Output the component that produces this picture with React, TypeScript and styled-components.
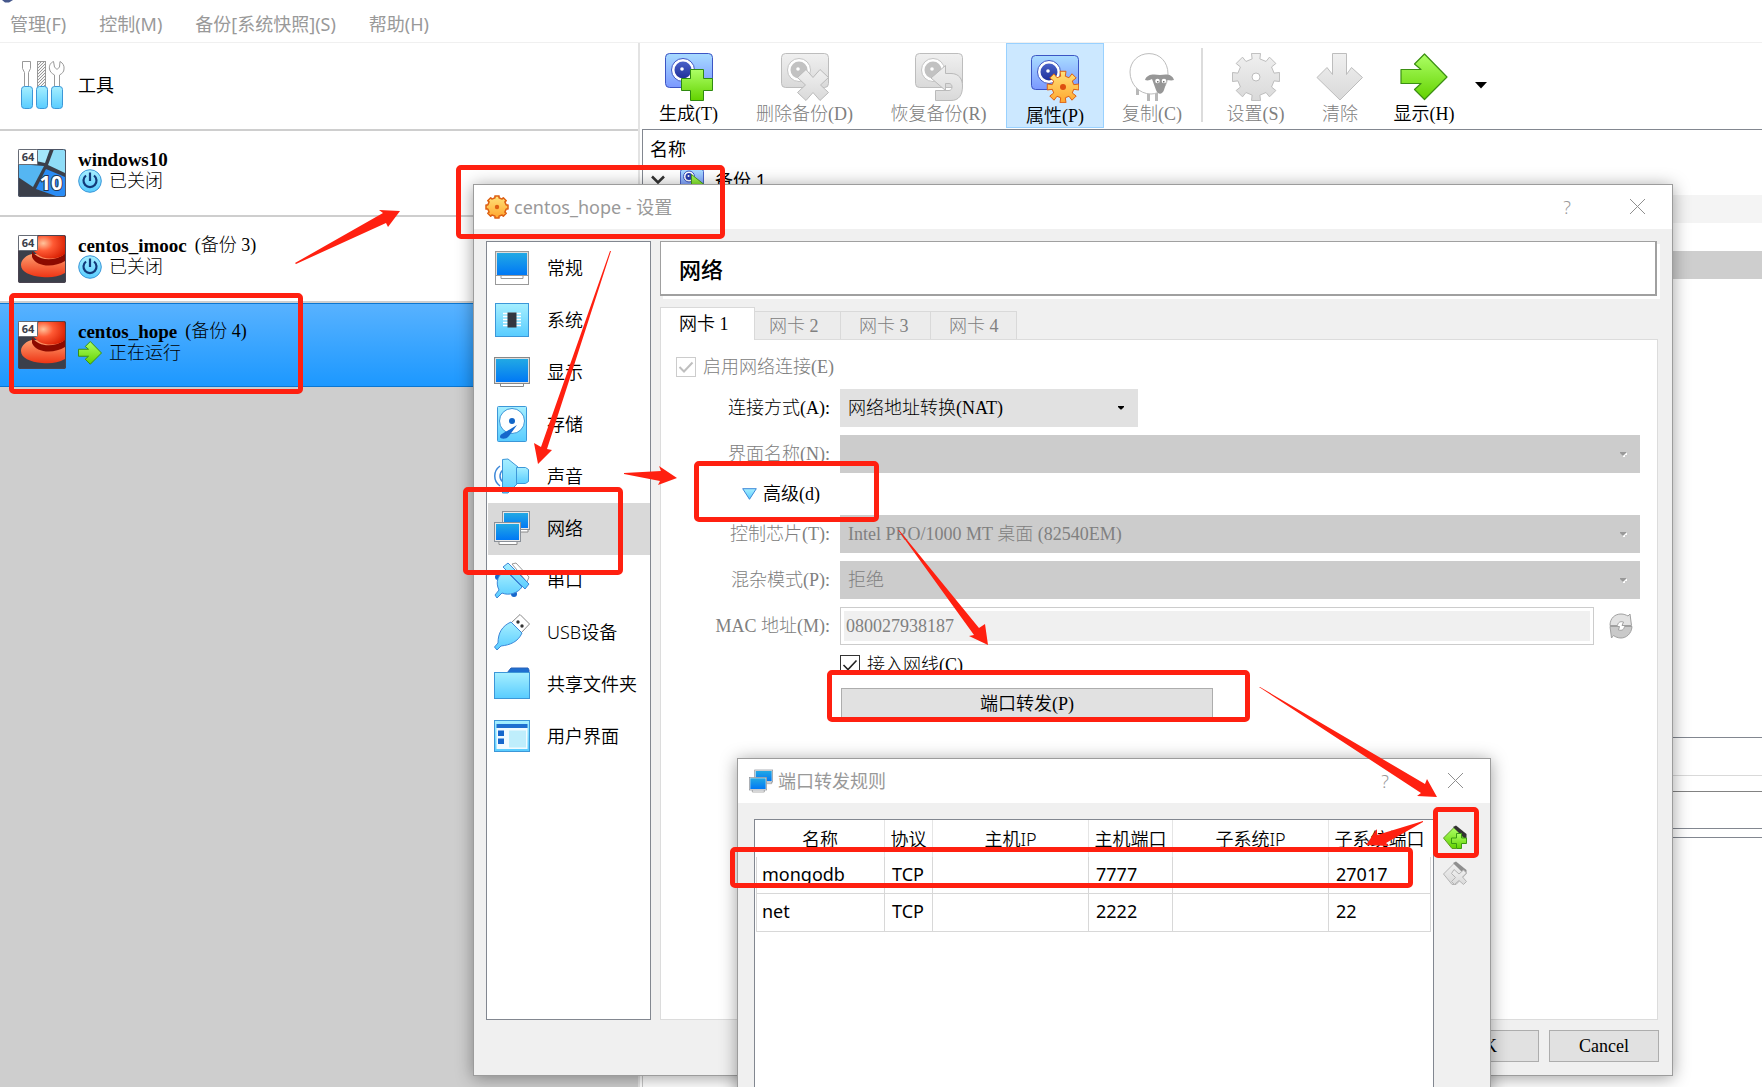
import React from "react";
import styled, { createGlobalStyle, css } from "styled-components";

const ui = `"Noto Sans", "Noto Sans CJK SC", sans-serif`;
const song = `"Liberation Serif", "Noto Sans CJK SC", serif`;
const annotationRed = "#ff2010";

const GlobalStyle = createGlobalStyle`
  *, *::before, *::after { box-sizing: border-box; }
  body { margin: 0; font-family: ${ui}; font-size: 18px; line-height: 24px; color: #000; background: #fff; }
  button, input, select { font: inherit; color: inherit; margin: 0; }
  button { border: 0; background: none; padding: 0; }
  svg { display: block; flex: none; }
`;

/* ---------- shared ---------- */

const Desktop = styled.div`
  position: relative;
  display: flex;
  flex-direction: column;
  height: 100vh;
  overflow: hidden;
`;

const Defs = styled.svg`
  position: absolute;
`;

const WindowFrame = styled.section<{ $x: number; $y: number; $w: number; $h: number }>`
  position: absolute;
  left: ${(p) => p.$x}px;
  top: ${(p) => p.$y}px;
  width: ${(p) => p.$w}px;
  height: ${(p) => p.$h}px;
  display: flex;
  flex-direction: column;
  background: #f0f0f0;
  border: 1px solid #9c9c9c;
  box-shadow: 0 2px 16px rgba(0, 0, 0, 0.38);
`;

const TitleBar = styled.header<{ $pad: number }>`
  display: flex;
  align-items: center;
  height: 44px;
  flex: none;
  padding: 0 23px 1px ${(p) => p.$pad}px;
  background: #fff;
  color: #999;
`;

const WindowTitle = styled.h2`
  flex: 1;
  margin: 0 0 0 5px;
  font-size: 18px;
  font-weight: 400;
`;

const CaptionButton = styled.button<{ $gap?: number }>`
  display: flex;
  align-items: center;
  justify-content: center;
  width: 24px;
  height: 30px;
  margin-left: ${(p) => p.$gap || 0}px;
  font-weight: 300;
`;

/* ---------- main window ---------- */

const MenuBar = styled.nav`
  display: flex;
  gap: 33px;
  align-items: center;
  height: 43px;
  flex: none;
  padding: 5px 10px 0;
  border-bottom: 1px solid #f0f0f0;
`;

const MenuItem = styled.button`
  color: #999;
  font-weight: 400;
  white-space: nowrap;
`;

const AppGlyph = styled.svg`
  position: absolute;
  left: 2px;
  top: 0;
`;

const MainArea = styled.main`
  display: flex;
  flex: 1;
  min-height: 0;
`;

const MachineList = styled.aside`
  width: 640px;
  flex: none;
  background: #cecece;
  border-right: 2px solid #e3e3e3;
`;

const MachineRow = styled.div<{ $selected?: boolean; $tall?: boolean }>`
  display: flex;
  align-items: flex-start;
  gap: 12px;
  height: ${(p) => (p.$tall ? 88 : 86)}px;
  padding: 18px;
  background: #fff;
  border-bottom: 2px solid #cecece;
  ${(p) =>
    p.$selected &&
    css`
      height: 84px;
      padding-top: 17px;
      background: linear-gradient(#58b2ff, #1c98ff);
      border-top: 1px solid #0b76d1;
      border-bottom: 1px solid #0b76d1;
    `}
`;

const ToolsLabel = styled.div`
  align-self: center;
  font-family: ${song};
  font-weight: 400;
`;

const MachineText = styled.div`
  display: flex;
  flex-direction: column;
  font-family: ${song};
  line-height: 21px;
`;

const MachineName = styled.div`
  display: flex;
  gap: 8px;
  height: 20px;
  font-weight: 300;
  & > strong {
    font-size: 19px;
    font-weight: 700;
  }
`;

const MachineState = styled.div`
  display: flex;
  align-items: center;
  gap: 7px;
  height: 24px;
  font-weight: 300;
`;

const SnapshotArea = styled.section`
  display: flex;
  flex-direction: column;
  flex: 1;
  min-width: 0;
`;

const ToolBar = styled.div`
  display: flex;
  gap: 1px;
  height: 86px;
  flex: none;
`;

const ToolButton = styled.button<{ $selected?: boolean; $min?: number }>`
  display: flex;
  flex-direction: column;
  align-items: center;
  min-width: ${(p) => p.$min || 97}px;
  height: 85px;
  padding: 10px 0 0;
  font-family: ${song};
  font-weight: 350;
  line-height: 27px;
  white-space: nowrap;
  &:disabled {
    color: #808080;
    font-weight: 300;
  }
  ${(p) =>
    p.$selected &&
    css`
      padding-top: 11px;
      background: #cce8ff;
      border: 1px solid #99d1ff;
    `}
`;

const ToolDivider = styled.div`
  width: 2px;
  height: 74px;
  margin: 5px 3px 0 1px;
  background: #dcdcdc;
`;

const DropButton = styled.button`
  width: 16px;
  height: 85px;
  display: flex;
  align-items: center;
  justify-content: center;
`;

const SnapshotTree = styled.div`
  height: 609px;
  flex: none;
  margin-left: 2px;
  border: 1px solid #828790;
  border-right: 0;
`;

const TreeHeader = styled.div`
  height: 37px;
  padding: 7px 7px 0;
`;

const TreeRow = styled.div<{ $tone?: string }>`
  display: flex;
  align-items: center;
  height: 28px;
  padding: 0 0 2px 7px;
  background: ${(p) => p.$tone || "transparent"};
`;

const TreeName = styled.span`
  margin-left: 11px;
`;

const ChevronBox = styled.span`
  width: 30px;
`;

const DetailBand = styled.div<{ $h: number; $line: string }>`
  height: ${(p) => p.$h}px;
  flex: none;
  margin-left: 2px;
  border-left: 1px solid #c8c8c8;
  border-bottom: 1px solid ${(p) => p.$line};
`;

const DetailRest = styled.div`
  flex: 1;
  margin-left: 2px;
  border-left: 1px solid #c8c8c8;
`;

/* ---------- settings window ---------- */

const SettingsBody = styled.div`
  display: grid;
  grid-template-columns: 165px 1fr;
  column-gap: 9px;
  flex: 1;
  min-height: 0;
  padding: 12px 12px 0;
`;

const CategoryList = styled.ul`
  margin: 0;
  padding: 1px 0 1px 1px;
  list-style: none;
  background: #fff;
  border: 1px solid #828790;
`;

const Category = styled.li<{ $selected?: boolean }>`
  background: ${(p) => (p.$selected ? "#d9d9d9" : "transparent")};
  & > button {
    display: flex;
    align-items: center;
    gap: 17px;
    width: 100%;
    height: 52px;
    padding: 0 0 2px 6px;
    font-weight: 350;
    white-space: nowrap;
  }
`;

const PageColumn = styled.div`
  display: flex;
  flex-direction: column;
`;

const PageTitle = styled.h1`
  margin: 0 3px 11px 0;
  height: 55px;
  flex: none;
  padding-left: 18px;
  background: #fff;
  border: 1px solid #a0a0a0;
  border-right-width: 2px;
  border-bottom-width: 2px;
  box-shadow: 3px 3px 0 #fff;
  font-size: 22px;
  line-height: 54px;
  font-weight: 500;
`;

const TabStrip = styled.div`
  display: flex;
  align-items: flex-end;
  height: 32px;
  flex: none;
`;

const Tab = styled.button<{ $active?: boolean }>`
  width: 91px;
  height: 28px;
  margin-right: -1px;
  padding-left: 18px;
  text-align: left;
  font-family: ${song};
  font-weight: 300;
  line-height: 26px;
  background: #ececec;
  border: 1px solid #d9d9d9;
  border-bottom: 0;
  color: #808080;
  &:last-child {
    width: 87px;
  }
  ${(p) =>
    p.$active &&
    css`
      position: relative;
      width: 95px;
      height: 33px;
      margin: 0 -5px -1px 0;
      line-height: 32px;
      background: #fff;
      color: #000;
      font-weight: 350;
    `}
`;

const TabPanel = styled.div`
  flex: 1;
  padding: 15px 17px 0 15px;
  background: #fff;
  border: 1px solid #dcdcdc;
  margin-right: 2px;
  font-family: ${song};
  font-weight: 300;
`;

const CheckLabel = styled.label<{ $off?: boolean }>`
  display: flex;
  align-items: center;
  gap: 7px;
  height: 24px;
  color: ${(p) => (p.$off ? "#808080" : "#000")};
`;

const CheckHolder = styled.span`
  position: relative;
  display: block;
  width: 20px;
  height: 20px;
  & > input {
    appearance: none;
    display: block;
    width: 20px;
    height: 20px;
    border: 1px solid #333;
    background: #fff;
  }
  & > input:disabled {
    border-color: #ccc;
  }
  & > svg {
    position: absolute;
    inset: 0;
    pointer-events: none;
  }
`;

const FormGrid = styled.div`
  display: grid;
  grid-template-columns: 156px 1fr;
  column-gap: 8px;
  row-gap: 8px;
  margin-top: 10px;
  align-items: center;
`;

const FieldLabel = styled.label<{ $off?: boolean }>`
  padding-right: 2px;
  text-align: right;
  white-space: nowrap;
  color: ${(p) => (p.$off ? "#808080" : "#000")};
`;

const ComboHolder = styled.div<{ $narrow?: boolean }>`
  position: relative;
  width: ${(p) => (p.$narrow ? "298px" : "100%")};
  & > select {
    appearance: none;
    display: block;
    width: 100%;
    height: 38px;
    padding: 0 30px 0 8px;
    border: 0;
    border-radius: 0;
    background: #e1e1e1;
    opacity: 1;
    color: #000;
  }
  & > select:disabled {
    background: #ccc;
    color: #808080;
  }
  & > svg {
    position: absolute;
    right: 13px;
    top: 16px;
    pointer-events: none;
  }
`;

const Disclosure = styled.button`
  grid-column: 1 / -1;
  display: flex;
  align-items: center;
  gap: 6px;
  height: 26px;
  padding-left: 66px;
  font-weight: 350;
`;

const MacRow = styled.div`
  display: flex;
  align-items: center;
  gap: 15px;
  padding-right: 7px;
`;

const MacInput = styled.input`
  flex: 1;
  min-width: 0;
  height: 38px;
  padding: 0 5px;
  border: 1px solid #ccc;
  box-shadow: inset 0 0 0 3px #fff;
  background: #f0f0f0;
  color: #808080;
`;

const SecondColumn = styled.div`
  grid-column: 2;
  display: flex;
  align-items: center;
  min-height: 24px;
`;

const PushButton = styled.button<{ $w: number }>`
  width: ${(p) => p.$w}px;
  height: 32px;
  background: #e1e1e1;
  border: 1px solid #adadad;
  font-family: ${song};
  font-weight: 350;
`;

const PushRow = styled(SecondColumn)`
  height: 38px;
  padding-left: 1px;
`;

const DialogFooter = styled.footer`
  display: flex;
  justify-content: flex-end;
  gap: 10px;
  flex: none;
  padding: 10px 13px;
  height: 55px;
`;

/* ---------- port forwarding window ---------- */

const RulesBody = styled.div`
  display: flex;
  flex: 1;
  padding: 16px 16px 0;
`;

const RulesBox = styled.div`
  flex: 1;
  padding: 0 2px 0 1px;
  background: #fff;
  border: 1px solid #828790;
`;

const RulesTable = styled.table`
  width: 100%;
  table-layout: fixed;
  border-collapse: separate;
  border-spacing: 0;
  th {
    height: 37px;
    padding: 1px 0 0;
    border-right: 1px solid #e5e5e5;
    font-weight: 350;
    white-space: nowrap;
  }
  th:last-child {
    border-right-color: transparent;
  }
  td {
    height: 37px;
    padding: 0 0 3px 7px;
    border-right: 1px solid #d8d8d8;
    border-bottom: 1px solid #d8d8d8;
  }
  td:first-child {
    border-left: 1px solid #d8d8d8;
    padding-left: 5px;
  }
  tr:last-child td {
    height: 38px;
  }
`;

const RuleActions = styled.div`
  display: flex;
  flex-direction: column;
  gap: 12px;
  padding: 6px 8px 0 9px;
`;

const Annotations = styled.svg`
  position: absolute;
  left: 0;
  top: 0;
  pointer-events: none;
`;

/* ---------- icons ---------- */

type IconProps = { gray?: boolean };

function gearPath(cx: number, cy: number, outer: number, inner: number, teeth: number) {
  const pts: string[] = [];
  const step = (Math.PI * 2) / teeth;
  for (let i = 0; i < teeth; i++) {
    const mid = i * step - Math.PI / 2;
    const add = (r: number, a: number) =>
      pts.push(`${(cx + r * Math.cos(a)).toFixed(2)} ${(cy + r * Math.sin(a)).toFixed(2)}`);
    add(inner, mid - step * 0.27);
    add(outer, mid - step * 0.24);
    add(outer, mid + step * 0.24);
    add(inner, mid + step * 0.27);
  }
  return `M${pts.join("L")}Z`;
}

const SharedDefs = () => {
  const ramps: [string, string, string][] = [
    ["gBlue", "#a9dcff", "#7b98ff"],
    ["gGray", "#f0f0f0", "#d9d9d9"],
    ["gGreen", "#adff66", "#63d200"],
    ["gOrange", "#ffe27a", "#ffa62e"],
    ["gSky", "#a6efff", "#58ccff"],
    ["gScreen", "#22a9e4", "#0078f5"],
    ["gBrim", "#ffa070", "#ee3414"],
    ["gNavy", "#4a62c8", "#20309a"],
  ];
  return (
    <Defs width="0" height="0" aria-hidden="true">
      <defs>
        {ramps.map(([id, a, b]) => (
          <linearGradient key={id} id={id} x1="0" y1="0" x2="0" y2="1">
            <stop offset="0" stopColor={a} />
            <stop offset="1" stopColor={b} />
          </linearGradient>
        ))}
        <radialGradient id="gCrown" cx="0.3" cy="0.35" r="0.8">
          <stop offset="0" stopColor="#ffc49c" />
          <stop offset="0.4" stopColor="#ff5a34" />
          <stop offset="1" stopColor="#d61c00" />
        </radialGradient>
        <pattern id="pFile" width="3" height="3" patternUnits="userSpaceOnUse">
          <path d="M0 3L3 0" stroke="#999" strokeWidth="1" />
        </pattern>
      </defs>
    </Defs>
  );
};

const EyeCard = ({ gray }: IconProps) => (
  <g>
    <rect x="0.5" y="0.5" width="47" height="34" rx="4" fill={gray ? "url(#gGray)" : "url(#gBlue)"} stroke={gray ? "#bdbdbd" : "#3c55c4"} />
    <circle cx="18" cy="17" r="11.5" fill="#fff" stroke={gray ? "#c4c4c4" : "#3c55c4"} />
    <circle cx="18" cy="17" r="8.5" fill={gray ? "#c2c2c2" : "url(#gNavy)"} />
    <circle cx="17" cy="16" r="1.8" fill="#fff" />
  </g>
);

const TakeIcon = () => (
  <svg width="48" height="48">
    <EyeCard />
    <path d="M25.5 16.500h13v9h9v12h-9v10h-13v-10h-9v-12h9z" fill="url(#gGreen)" stroke="#2f8a10" />
  </svg>
);

const DeleteIcon = () => (
  <svg width="48" height="48">
    <EyeCard gray />
    <path d="M25 16.500l7 8 7-8 8.500 8-8 7.500 8 7.500-8.500 8-7-8-7 8-8.500-8 8-7.500-8-7.500z" fill="url(#gGray)" stroke="#bababa" />
  </svg>
);

const RestoreIcon = () => (
  <svg width="48" height="48">
    <EyeCard gray />
    <path d="M16 25L30.500 12.500V20.500H36C44 20.500 47.500 26 47.500 33C47.500 42 44 47.500 36 47.500H20.500V37.500H34C38 37.500 38 30.500 34 30.500H30.500V37.500Z" fill="url(#gGray)" stroke="#bababa" />
  </svg>
);

const PropertiesIcon = () => (
  <svg width="48" height="48">
    <EyeCard />
    <path d={gearPath(32, 32, 16, 11, 8)} fill="url(#gOrange)" stroke="#dd5f12" strokeLinejoin="round" />
    <circle cx="32" cy="32" r="3" fill="#dd4f10" />
  </svg>
);

const SheepIcon = () => (
  <svg width="48" height="48" viewBox="-1 0 48 48">
    <path d="M7 34h3v8h-3zM18 38h3v10h-3zM26 38h3v10h-3z" fill="#b8b8b8" />
    <path d="M1 19C1 9 9 .6 20 .6C31 .6 39 9 39 21C39 34 31 41 22 41C10 41 1 31 1 19Z" fill="#fff" stroke="#bdbdbd" />
    <path d="M16 27c2-6 8-6 15-5c7-1 12-1 14 5c-3 1-5 0-7 0l-3 10c-2 5-6 5-8 0l-4-11c-2 1-4 2-7 1z" fill="#979797" />
    <circle cx="28.500" cy="28" r="2.300" fill="#fff" />
    <circle cx="35" cy="28" r="2.300" fill="#fff" />
    <path d="M28 28h1.500v1.500h-1.500zM34 28h1.500v1.500h-1.500z" fill="#777" />
  </svg>
);

const GrayGearIcon = () => (
  <svg width="48" height="48">
    <path d={gearPath(24, 24, 24, 18.500, 8)} fill="url(#gGray)" stroke="#bdbdbd" strokeLinejoin="round" />
    <circle cx="24" cy="24" r="4" fill="#fff" stroke="#bdbdbd" />
  </svg>
);

const DownArrowIcon = () => (
  <svg width="48" height="48">
    <path d="M16.500 .5h14v21l5-7 11 10-22.500 22.500L1 24.500l10-10 5.500 7z" fill="url(#gGray)" stroke="#bdbdbd" strokeLinejoin="round" />
  </svg>
);

const GreenArrow = ({ size }: { size: number }) => (
  <svg width={size} height={size} viewBox="0 0 48 48">
    <path d="M1 16.500H21L14.500 11L24.500 1L47 24L24.500 46.500L14.500 36.500L21 30.500H1Z" fill="url(#gGreen)" stroke="#3b8f12" strokeWidth={size < 30 ? 2 : 1.2} strokeLinejoin="round" />
  </svg>
);

const ToolsIcon = () => (
  <svg width="48" height="48">
    <path d="M4.500 .5h8v7l-2 4v14h-4v-14l-2-4z" fill="#fff" stroke="#999" />
    <rect x="19.500" y=".5" width="8" height="26" fill="#f6f6f6" stroke="#999" />
    <rect x="20" y="1" width="7" height="25" fill="url(#pFile)" />
    <path d="M35.500 .5C32 2 31 5 31.500 8C32 11 34 12.500 36.500 14V26H41.500V14C44 12.500 46 11 46 8C46.500 5 45 2 42 .5L41.500 6L39 8.500L36.500 6Z" fill="#fff" stroke="#999" />
    <g fill="url(#gSky)" stroke="#3c97d8">
      <rect x="3.500" y="25.500" width="11" height="22" rx="3" />
      <rect x="18.500" y="25.500" width="11" height="22" rx="3" />
      <rect x="33.500" y="25.500" width="11" height="22" rx="3" />
    </g>
  </svg>
);

const Badge64 = () => (
  <g>
    <rect x=".5" y=".5" width="19" height="15" rx="1" fill="#fff" stroke="#666b75" />
    <text x="10" y="12" textAnchor="middle" fontFamily={ui} fontSize="11" fontWeight="700" fill="#3b3f4a">
      64
    </text>
  </g>
);

const Windows10Icon = () => (
  <svg width="48" height="48">
    <rect width="48" height="48" rx="2" fill="#3b3f4a" />
    <path d="M0 15L26 17L15 38L0 28Z" fill="#55b6f2" />
    <path d="M18 0H32L27 14L18 12Z" fill="#a4e6fa" />
    <path d="M36 0H47V24L30 16Z" fill="#8fddf8" />
    <path d="M28 20L47 28V47H38L18 40Z" fill="#2a8cf4" />
    <text x="33" y="41" textAnchor="middle" fontFamily={ui} fontSize="20" fontWeight="700" fill="#fff" stroke="#25344e" strokeWidth="2" paintOrder="stroke">
      10
    </text>
    <rect x=".5" y=".5" width="47" height="47" rx="2" fill="none" stroke="#4d5566" />
    <Badge64 />
  </svg>
);

const HatIcon = () => (
  <svg width="48" height="48">
    <rect width="48" height="48" rx="2" fill="#3b3f4a" />
    <path d="M3 30C3 24 9 20 14 19L47 20V38C40 42 32 43 24 42C12 41 3 37 3 30Z" fill="url(#gBrim)" />
    <path d="M14 16C20 26 36 27 47 19V26C36 33 18 32 14 22Z" fill="#8c0a00" />
    <path d="M21 0H47V19C38 26 22 25 16 16C17 11 18 5 21 0Z" fill="url(#gCrown)" />
    <rect x=".5" y=".5" width="47" height="47" rx="2" fill="none" stroke="#4a4350" />
    <Badge64 />
  </svg>
);

const PowerIcon = () => (
  <svg width="24" height="24">
    <circle cx="12" cy="12" r="11.300" fill="url(#gSky)" stroke="#3c97d8" />
    <path d="M8 6.500a6.500 6.500 0 1 0 8 0" fill="none" stroke="#123a7a" strokeWidth="2.200" />
    <path d="M12 3.500v8.500" stroke="#123a7a" strokeWidth="2.200" />
  </svg>
);

const TreeSnapshotIcon = () => (
  <svg width="24" height="24">
    <rect x=".5" y="1.500" width="23" height="18" rx="2" fill="url(#gBlue)" stroke="#4a63c8" />
    <circle cx="9" cy="8.500" r="5.500" fill="#fff" stroke="#3c55c4" />
    <circle cx="9" cy="8.500" r="3.500" fill="#2a3eb0" />
    <circle cx="8.500" cy="8" r="1" fill="#fff" />
    <path d="M11.500 6.500L23.500 16L11.500 23.500Z" fill="url(#gGreen)" stroke="#4a9a20" />
  </svg>
);

const SmallGearIcon = () => (
  <svg width="24" height="24">
    <path d={gearPath(12, 12, 11.2, 9.4, 8)} fill="url(#gOrange)" stroke="#dd5f12" strokeWidth="1.500" strokeLinejoin="round" />
    <circle cx="12" cy="12" r="2.200" fill="#dd5f12" />
  </svg>
);

const NetworkIcon = ({ size }: { size: number }) => (
  <svg width={size} height={size} viewBox="0 0 36 36">
    <path d="M26 19h8v3h-8z" fill="#fff" stroke="#8a8a8a" />
    <rect x="8.500" y="1.500" width="27" height="18" fill="#e8e8e8" stroke="#8a9098" />
    <rect x="10" y="3" width="24" height="15" fill="url(#gScreen)" />
    <path d="M5 31h18v3.500H5z" fill="#fff" stroke="#8a8a8a" />
    <rect x=".5" y="12.500" width="26" height="19" fill="#e8e8e8" stroke="#8a9098" />
    <rect x="2" y="14" width="23" height="16" fill="url(#gScreen)" />
  </svg>
);

const categoryArt: Record<string, React.ReactNode> = {
  general: (
    <>
      <rect x="1.500" y="25.500" width="33" height="9" fill="#fff" stroke="#999" />
      <path d="M7 25.500v3h22v-3" fill="#fff" stroke="#999" />
      <rect x="1.500" y="1.500" width="33" height="24" fill="#ddd" stroke="#999" />
      <rect x="3" y="3" width="30" height="22" fill="url(#gScreen)" />
    </>
  ),
  system: (
    <>
      <rect x="1.500" y="1.500" width="33" height="33" fill="url(#gSky)" stroke="#3c97d8" />
      <path d="M9 11.500h18M9 14.500h18M9 17.500h18M9 20.500h18M9 23.500h18" stroke="#fff" strokeWidth="1.500" />
      <rect x="13.500" y="10.500" width="9" height="15" fill="#33363f" />
    </>
  ),
  display: (
    <>
      <path d="M6.500 29.500v3h23v-3" fill="#fff" stroke="#888" />
      <rect x=".5" y="3.500" width="35" height="26" fill="#ddd" stroke="#888" />
      <rect x="2" y="5" width="32" height="23" fill="url(#gScreen)" />
    </>
  ),
  storage: (
    <>
      <rect x="3.500" y=".5" width="29" height="35" rx="1" fill="url(#gSky)" stroke="#3c97d8" />
      <circle cx="18" cy="15" r="12.500" fill="#fff" stroke="#3c97d8" />
      <circle cx="18" cy="15" r="3" fill="#1266c8" />
      <path d="M23 19L15 30C12 34 6 33 6 31C6 28 10 27 13 25Z" fill="#1667cc" />
    </>
  ),
  audio: (
    <>
      <path d="M6 8C-1 13-1 23 6 28M9 12C5 15 5 21 9 24" fill="none" stroke="#3c87d8" strokeWidth="1.500" />
      <path d="M8.500 1.500L14 1L24 9V25L14 35H8.500Z" fill="url(#gSky)" stroke="#3c97d8" />
      <path d="M22.500 9.500h9l3 2v12l-3 2h-9z" fill="url(#gSky)" stroke="#3c97d8" />
    </>
  ),
  serial: (
    <>
      <path d="M18 2L22 1L35 15L33 20Z" fill="#fff" stroke="#999" />
      <circle cx="4" cy="15" r="3" fill="#1667cc" />
      <circle cx="20" cy="32" r="3" fill="#1667cc" />
      <path d="M1 33L5 28C1 20 4 12 12 9L28 25C24 31 15 34 8 31L3 36Z" fill="url(#gSky)" stroke="#3c87d8" />
      <path d="M9 5L14 1L35 22L31 27Z" fill="url(#gSky)" stroke="#3c87d8" />
    </>
  ),
  usb: (
    <>
      <path d="M17 9L26 .5L35.500 10L27 19Z" fill="#fff" stroke="#888" />
      <circle cx="24" cy="8" r="1.700" fill="#333" />
      <circle cx="28" cy="12" r="1.700" fill="#333" />
      <path d="M17 8L28 19C24 28 16 31 7 32L3 36L.5 33L4 29C4 19 8 12 17 8Z" fill="url(#gSky)" stroke="#3c87d8" />
    </>
  ),
  folder: (
    <>
      <path d="M13 7L17 2H34L35 4V10H13Z" fill="#1f6fd0" stroke="#2a62b8" />
      <rect x=".5" y="6.500" width="35" height="26" fill="url(#gSky)" stroke="#3c97d8" />
    </>
  ),
  interface: (
    <>
      <rect x=".5" y="2.500" width="35" height="31" fill="url(#gSky)" stroke="#3c97d8" />
      <rect x="2.500" y="10" width="31" height="21" fill="#f2fbff" />
      <rect x="2.500" y="6" width="31" height="4" fill="#1f6fd0" />
      <path d="M4 12.500h6v5.500h-6zM4 20.500h6v5.500h-6z" fill="#1667cc" />
      <rect x="15" y="12.500" width="17" height="17" fill="#bfeefc" />
    </>
  ),
};

const CloseGlyph = () => (
  <svg width="17" height="17">
    <path d="M1 1L16 16M16 1L1 16" stroke="#8f8f8f" strokeWidth="1" />
  </svg>
);

const ComboArrow = ({ gray }: IconProps) => (
  <svg width="8" height="6">
    {gray && <path d="M2 2h6v2h-2v2h-2v-2z" fill="#fff" />}
    <path d="M1 1h6v1L4.500 4.500h-1L1 2z" fill={gray ? "#999" : "#000"} />
  </svg>
);

const Tick = ({ gray }: IconProps) => (
  <svg width="20" height="20">
    <path d="M3.500 10L8 14.500L16.500 5.500" fill="none" stroke={gray ? "#bfbfbf" : "#222"} strokeWidth={gray ? 2 : 1.600} />
  </svg>
);

const RefreshIcon = () => (
  <svg width="24" height="26" viewBox="0 0 24 26">
    <path d="M1 12.500C1 5 6 1 12 1C15 1 17 2 19 3L21 1L22.500 12.500H13L14.500 9C11 8 9 9.500 8.500 12.500Z" fill="#e2e2e2" stroke="#a0a0a0" />
    <path d="M23 13.500C22.500 21 17 25 12 25C9 25 6.500 24 4.500 22.500L2.500 25L1 13.500H10.500L9.500 17C13 18 15 16.500 15.500 13.500Z" fill="#c9c9c9" stroke="#a0a0a0" />
  </svg>
);

const RuleIcon = ({ remove }: { remove?: boolean }) => (
  <svg width="24" height="24">
    <path d="M.5 13L11 2.500L23 13L13 23.500H9Z" fill={remove ? "url(#gGray)" : "url(#gGreen)"} stroke={remove ? "#b4b4b4" : "#5c9a20"} />
    <path d="M10 2L13 .5L23.500 9V13H21Z" fill={remove ? "#8f8f8f" : "#333"} />
    {remove ? (
      <path d="M11 8.500l5 4.500 4.500-4 3 3-4 4 4 4.500-3 3-4.500-4-4.500 4-3-3 4-4-4-4z" fill="url(#gGray)" stroke="#b4b4b4" />
    ) : (
      <path d="M13.500 8.500h5v4.500h5v5.500h-5v5h-5v-5h-5v-5.500h5z" fill="url(#gGreen)" stroke="#3b9a12" />
    )}
  </svg>
);

/* ---------- data ---------- */

const menus = ["管理(F)", "控制(M)", "备份[系统快照](S)", "帮助(H)"];

const categories: [string, string][] = [
  ["general", "常规"],
  ["system", "系统"],
  ["display", "显示"],
  ["storage", "存储"],
  ["audio", "声音"],
  ["network", "网络"],
  ["serial", "串口"],
  ["usb", "USB设备"],
  ["folder", "共享文件夹"],
  ["interface", "用户界面"],
];

const ruleColumns: [string, number][] = [
  ["名称", 129],
  ["协议", 48],
  ["主机IP", 156],
  ["主机端口", 84],
  ["子系统IP", 156],
  ["子系统端口", 102],
];

const rules = [
  ["mongodb", "TCP", "", "7777", "", "27017"],
  ["net", "TCP", "", "2222", "", "22"],
];

const highlightBoxes = [
  [9, 293, 294, 101],
  [456, 165, 269, 74],
  [463, 487, 160, 88],
  [694, 461, 185, 61],
  [827, 670, 423, 52],
  [1433, 807, 46, 51],
  [730, 847, 683, 41],
];

const arrows = [
  "295,263 383,213 379,210 400,211 388,227 386,223 296,264",
  "610,251 541,447 534,443 538,464 552,450 547,449 611,251",
  "624,473 661,471 659,466 677,478 658,485 660,481 624,474",
  "899,530 979,628 985,624 988,645 969,636 974,635 898,530",
  "1260,687 1425,784 1427,779 1437,797 1417,796 1421,793 1259,687",
  "1423,821 1377,835 1377,829 1366,845 1389,846 1386,843 1423,822",
];

/* ---------- app ---------- */

function Machine({ name, snapshot, state, icon, stateIcon, selected }: {
  name: string;
  snapshot?: string;
  state: string;
  icon: React.ReactNode;
  stateIcon: React.ReactNode;
  selected?: boolean;
}) {
  return (
    <MachineRow $selected={selected}>
      {icon}
      <MachineText>
        <MachineName>
          <strong>{name}</strong>
          {snapshot && <span>{snapshot}</span>}
        </MachineName>
        <MachineState>
          {stateIcon}
          {state}
        </MachineState>
      </MachineText>
    </MachineRow>
  );
}

function Combo({ id, label, value, narrow, disabled }: {
  id: string;
  label: string;
  value: string;
  narrow?: boolean;
  disabled?: boolean;
}) {
  return (
    <>
      <FieldLabel htmlFor={id} $off={disabled}>{label}</FieldLabel>
      <ComboHolder $narrow={narrow}>
        <select id={id} disabled={disabled}>
          <option>{value}</option>
        </select>
        <ComboArrow gray={disabled} />
      </ComboHolder>
    </>
  );
}

function Check({ label, disabled }: { label: string; disabled?: boolean }) {
  return (
    <CheckLabel $off={disabled}>
      <CheckHolder>
        <input type="checkbox" defaultChecked disabled={disabled} />
        <Tick gray={disabled} />
      </CheckHolder>
      {label}
    </CheckLabel>
  );
}

export default function App() {
  return (
    <Desktop>
      <GlobalStyle />
      <SharedDefs />
      <AppGlyph width="12" height="3" aria-hidden="true">
        <path d="M0 0h11L7 2.500H3z" fill="#46588c" />
      </AppGlyph>
      <MenuBar>
        {menus.map((m) => (
          <MenuItem key={m}>{m}</MenuItem>
        ))}
      </MenuBar>
      <MainArea>
        <MachineList>
          <MachineRow $tall>
            <ToolsIcon />
            <ToolsLabel>工具</ToolsLabel>
          </MachineRow>
          <Machine name="windows10" state="已关闭" icon={<Windows10Icon />} stateIcon={<PowerIcon />} />
          <Machine name="centos_imooc" snapshot="(备份 3)" state="已关闭" icon={<HatIcon />} stateIcon={<PowerIcon />} />
          <Machine name="centos_hope" snapshot="(备份 4)" state="正在运行" icon={<HatIcon />} stateIcon={<GreenArrow size={24} />} selected />
        </MachineList>
        <SnapshotArea>
          <ToolBar>
            <ToolButton><TakeIcon />生成(T)</ToolButton>
            <ToolButton disabled $min={133}><DeleteIcon />删除备份(D)</ToolButton>
            <ToolButton disabled $min={133}><RestoreIcon />恢复备份(R)</ToolButton>
            <ToolButton $selected $min={98}><PropertiesIcon />属性(P)</ToolButton>
            <ToolButton disabled $min={94}><SheepIcon />复制(C)</ToolButton>
            <ToolDivider />
            <ToolButton disabled><GrayGearIcon />设置(S)</ToolButton>
            <ToolButton disabled $min={70}><DownArrowIcon />清除</ToolButton>
            <ToolButton $min={96}><GreenArrow size={48} />显示(H)</ToolButton>
            <DropButton aria-label="显示选项">
              <svg width="12" height="7"><path d="M0 0h12L6 6.500z" /></svg>
            </DropButton>
          </ToolBar>
          <SnapshotTree>
            <TreeHeader>名称</TreeHeader>
            <TreeRow>
              <ChevronBox>
                <svg width="16" height="10"><path d="M2 1.500L8 7.500L14 1.500" fill="none" stroke="#333" strokeWidth="2.500" /></svg>
              </ChevronBox>
              <TreeSnapshotIcon />
              <TreeName>备份 1</TreeName>
            </TreeRow>
            <TreeRow $tone="#f4f4f4" />
            <TreeRow />
            <TreeRow $tone="#cecece" />
          </SnapshotTree>
          <DetailBand $h={38} $line="#d9d9d9" />
          <DetailBand $h={16} $line="#828282" />
          <DetailBand $h={37} $line="#828790" />
          <DetailBand $h={9} $line="#828790" />
          <DetailRest />
        </SnapshotArea>
      </MainArea>

      <WindowFrame $x={473} $y={184} $w={1200} $h={892}>
        <TitleBar $pad={11}>
          <SmallGearIcon />
          <WindowTitle>centos_hope - 设置</WindowTitle>
          <CaptionButton>?</CaptionButton>
          <CaptionButton $gap={46} aria-label="关闭"><CloseGlyph /></CaptionButton>
        </TitleBar>
        <SettingsBody>
          <CategoryList>
            {categories.map(([key, label]) => (
              <Category key={key} $selected={key === "network"}>
                <button>
                  {key === "network" ? <NetworkIcon size={36} /> : <svg width="36" height="36">{categoryArt[key]}</svg>}
                  {label}
                </button>
              </Category>
            ))}
          </CategoryList>
          <PageColumn>
            <PageTitle>网络</PageTitle>
            <TabStrip>
              <Tab $active>网卡 1</Tab>
              <Tab>网卡 2</Tab>
              <Tab>网卡 3</Tab>
              <Tab>网卡 4</Tab>
            </TabStrip>
            <TabPanel>
              <Check label="启用网络连接(E)" disabled />
              <FormGrid>
                <Combo id="attach" label="连接方式(A):" value="网络地址转换(NAT)" narrow />
                <Combo id="iface" label="界面名称(N):" value="" disabled />
                <Disclosure>
                  <svg width="15" height="12"><path d="M.7 .7h13.600L7.500 11.300z" fill="url(#gSky)" stroke="#3c87d8" /></svg>
                  高级(d)
                </Disclosure>
                <Combo id="chip" label="控制芯片(T):" value="Intel PRO/1000 MT 桌面 (82540EM)" disabled />
                <Combo id="promisc" label="混杂模式(P):" value="拒绝" disabled />
                <FieldLabel htmlFor="mac" $off>MAC 地址(M):</FieldLabel>
                <MacRow>
                  <MacInput id="mac" defaultValue="080027938187" disabled />
                  <button disabled aria-label="刷新"><RefreshIcon /></button>
                </MacRow>
                <SecondColumn>
                  <Check label="接入网线(C)" />
                </SecondColumn>
                <PushRow>
                  <PushButton $w={372}>端口转发(P)</PushButton>
                </PushRow>
              </FormGrid>
            </TabPanel>
          </PageColumn>
        </SettingsBody>
        <DialogFooter>
          <PushButton $w={110}>OK</PushButton>
          <PushButton $w={110}>Cancel</PushButton>
        </DialogFooter>
      </WindowFrame>

      <WindowFrame $x={737} $y={758} $w={754} $h={420}>
        <TitleBar $pad={11}>
          <NetworkIcon size={24} />
          <WindowTitle>端口转发规则</WindowTitle>
          <CaptionButton>?</CaptionButton>
          <CaptionButton $gap={46} aria-label="关闭"><CloseGlyph /></CaptionButton>
        </TitleBar>
        <RulesBody>
          <RulesBox>
            <RulesTable>
              <colgroup>
                {ruleColumns.map(([name, width]) => (
                  <col key={name} width={width} />
                ))}
              </colgroup>
              <thead>
                <tr>{ruleColumns.map(([name]) => <th key={name} scope="col">{name}</th>)}</tr>
              </thead>
              <tbody>
                {rules.map((r) => (
                  <tr key={r[0]}>{r.map((cell, i) => <td key={i}>{cell}</td>)}</tr>
                ))}
              </tbody>
            </RulesTable>
          </RulesBox>
          <RuleActions>
            <button aria-label="添加规则"><RuleIcon /></button>
            <button aria-label="删除规则" disabled><RuleIcon remove /></button>
          </RuleActions>
        </RulesBody>
      </WindowFrame>

      <Annotations width="1762" height="1087" aria-hidden="true">
        {highlightBoxes.map(([x, y, w, h]) => (
          <rect key={`${x}-${y}`} x={x + 2.5} y={y + 2.5} width={w - 5} height={h - 5} rx="2.500" fill="none" stroke={annotationRed} strokeWidth="5" />
        ))}
        {arrows.map((points) => (
          <polygon key={points} points={points} fill={annotationRed} />
        ))}
      </Annotations>
    </Desktop>
  );
}
